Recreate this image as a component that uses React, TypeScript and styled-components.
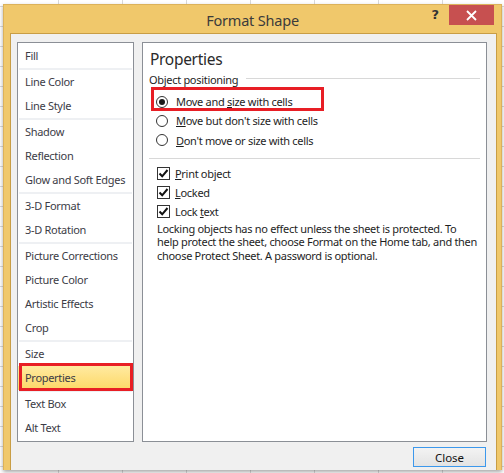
import React from "react";
import styled, { createGlobalStyle } from "styled-components";

const GlobalStyle = createGlobalStyle`
  html, body {
    margin: 0;
    padding: 0;
    width: 504px;
    height: 473px;
    overflow: hidden;
    background-color: #ffffff;
    background-image:
      linear-gradient(to right, #d9d9d9 1px, transparent 1px),
      linear-gradient(to bottom, #d9d9d9 1px, transparent 1px);
    background-size: 64px 100%, 100% 20px;
    background-position: 58px 0, 0 6px;
    font-family: "Segoe UI", "Noto Sans", "Open Sans", sans-serif;
  }
`;

const Screen = styled.div`
  padding: 4px 2px 0 3px;
`;

const Dialog = styled.div`
  display: flex;
  flex-direction: column;
  height: 466px;
  border: 1px solid #dcb25a;
  border-bottom: none;
  background: #f0c86b;
  box-shadow: 0 2px 4px rgba(0, 0, 0, 0.35);
  box-sizing: border-box;
`;

const TitleBar = styled.div`
  display: grid;
  grid-template-columns: 1fr auto 1fr;
  align-items: start;
  height: 28px;
`;

const Title = styled.div`
  grid-column: 2;
  padding-top: 6px;
  font-size: 14.5px;
  letter-spacing: -0.2px;
  line-height: 18px;
  color: #3b3b3b;
`;

const TitleButtons = styled.div`
  grid-column: 3;
  display: flex;
  justify-content: flex-end;
  align-items: center;
  padding-right: 7px;
`;

const HelpGlyph = styled.span`
  font-family: "DejaVu Sans", "Noto Sans", sans-serif;
  font-weight: bold;
  font-size: 13px;
  line-height: 20px;
  color: #333;
  margin-right: 10px;
`;

const CloseBox = styled.div`
  display: flex;
  align-items: center;
  justify-content: center;
  width: 45px;
  height: 20px;
  background: #c75050;
`;

const Body = styled.div`
  flex: 1;
  display: flex;
  flex-direction: column;
  margin: 0 4px 0 6px;
  padding: 8px 9px 0 6px;
  background: #f0f0f0;
  border: 1px solid #c89d45;
  border-bottom: none;
  font-size: 11px;
  letter-spacing: -0.3px;
`;

const Panes = styled.div`
  display: flex;
  gap: 8px;
  height: 400px;
`;

const NavList = styled.div`
  flex: 0 0 117px;
  box-sizing: border-box;
  border: 1px solid #8b8f96;
  background: #ffffff;
  padding-top: 1px;
`;

const NavItem = styled.div<{ $active?: boolean }>`
  position: relative;
  height: 24px;
  line-height: 24px;
  padding-left: 7px;
  color: #3c3c46;
  white-space: nowrap;
  ${(p) =>
    p.$active &&
    `
    background: linear-gradient(#ffeaa0, #fdd866);
    &::after {
      content: "";
      position: absolute;
      top: -3px;
      bottom: -1px;
      left: 1px;
      right: 0;
      border: 3px solid #e81e25;
    }
  `}
`;

const NavSep = styled.div`
  height: 2px;
  margin: 0 1px;
  background: #eef0f3;
`;

const Content = styled.div`
  flex: 1;
  min-width: 0;
  box-sizing: border-box;
  border: 1px solid #8b8f96;
  background: #ffffff;
  padding: 6px 6px 0 6px;
  color: #1e1e1e;
`;

const Heading = styled.div`
  font-size: 15.5px;
  letter-spacing: -0.3px;
  line-height: 20px;
  color: #2a2a2a;
  margin-left: 1px;
`;

const GroupHeader = styled.div`
  display: flex;
  align-items: center;
  height: 16px;
  margin-top: 2px;
  &::after {
    content: "";
    flex: 1;
    height: 1px;
    background: #d8d8d8;
    margin: 0 0 1px 8px;
  }
`;

const OptionList = styled.div`
  display: flex;
  flex-direction: column;
  padding-top: 5px;
`;

const OptionRow = styled.label<{ $marked?: boolean }>`
  position: relative;
  display: flex;
  align-items: center;
  height: 19.3px;
  padding-left: 7px;
  ${(p) =>
    p.$marked &&
    `
    &::after {
      content: "";
      position: absolute;
      top: -5px;
      left: 2px;
      width: 173px;
      height: 24px;
      box-sizing: border-box;
      border: 3px solid #e81e25;
    }
  `}
`;

const Radio = styled.span<{ $on?: boolean }>`
  display: flex;
  align-items: center;
  justify-content: center;
  width: 12px;
  height: 12px;
  box-sizing: border-box;
  border: 1px solid #333;
  border-radius: 50%;
  background: #fff;
  margin-right: 8px;
  &::before {
    content: "";
    display: ${(p) => (p.$on ? "block" : "none")};
    width: 6px;
    height: 6px;
    border-radius: 50%;
    background: #1a1a1a;
  }
`;

const Divider = styled.div`
  height: 1px;
  background: #d8d8d8;
  margin: 8px 0 5px 0;
`;

const CheckRow = styled.label`
  display: flex;
  align-items: center;
  height: 19px;
  padding-left: 8px;
`;

const CheckBox = styled.span`
  display: flex;
  align-items: center;
  justify-content: center;
  width: 13px;
  height: 13px;
  box-sizing: border-box;
  border: 1px solid #333;
  background: #fff;
  margin-right: 5px;
`;

const Note = styled.p`
  margin: 1px 0 0 8px;
  max-width: 326px;
  line-height: 13.4px;
`;

const Footer = styled.div`
  display: flex;
  justify-content: flex-end;
  padding: 5px 1px 0 0;
`;

const Button = styled.button`
  width: 73px;
  height: 20px;
  border: 1px solid #3c98ec;
  background: linear-gradient(#f3f3f3, #e3e3e3);
  font-family: inherit;
  font-size: 11.5px;
  color: #111;
  padding: 0;
`;

const navGroups = [
  ["Fill"],
  ["Line Color", "Line Style"],
  ["Shadow", "Reflection", "Glow and Soft Edges"],
  ["3-D Format", "3-D Rotation"],
  ["Picture Corrections", "Picture Color", "Artistic Effects", "Crop"],
  ["Size", "Properties"],
  ["Text Box", "Alt Text"],
];

const Tick = () => (
  <svg width="11" height="11" viewBox="0 0 11 11">
    <path d="M1.5 5.5 L4.2 8.3 L9.5 2" fill="none" stroke="#111" strokeWidth="2" />
  </svg>
);

export default function App() {
  return (
    <>
      <GlobalStyle />
      <Screen>
        <Dialog>
          <TitleBar>
            <Title>Format Shape</Title>
            <TitleButtons>
              <HelpGlyph>?</HelpGlyph>
              <CloseBox>
                <svg width="11" height="11" viewBox="0 0 11 11">
                  <path d="M1 1 L10 10 M10 1 L1 10" stroke="#fff" strokeWidth="1.8" />
                </svg>
              </CloseBox>
            </TitleButtons>
          </TitleBar>
          <Body>
            <Panes>
              <NavList>
                {navGroups.map((group, gi) => (
                  <React.Fragment key={gi}>
                    {gi > 0 && <NavSep />}
                    {group.map((name) => (
                      <NavItem key={name} $active={name === "Properties"}>
                        {name}
                      </NavItem>
                    ))}
                  </React.Fragment>
                ))}
              </NavList>
              <Content>
                <Heading>Properties</Heading>
                <GroupHeader>Object positioning</GroupHeader>
                <OptionList>
                  <OptionRow $marked>
                    <Radio $on />
                    <span>
                      Move and <u>s</u>ize with cells
                    </span>
                  </OptionRow>
                  <OptionRow>
                    <Radio />
                    <span>
                      <u>M</u>ove but don't size with cells
                    </span>
                  </OptionRow>
                  <OptionRow>
                    <Radio />
                    <span>
                      <u>D</u>on't move or size with cells
                    </span>
                  </OptionRow>
                </OptionList>
                <Divider />
                <CheckRow>
                  <CheckBox>
                    <Tick />
                  </CheckBox>
                  <span>
                    <u>P</u>rint object
                  </span>
                </CheckRow>
                <CheckRow>
                  <CheckBox>
                    <Tick />
                  </CheckBox>
                  <span>
                    <u>L</u>ocked
                  </span>
                </CheckRow>
                <CheckRow>
                  <CheckBox>
                    <Tick />
                  </CheckBox>
                  <span>
                    Lock <u>t</u>ext
                  </span>
                </CheckRow>
                <Note>
                  Locking objects has no effect unless the sheet is protected. To
                  <br />
                  help protect the sheet, choose Format on the Home tab, and then
                  <br />
                  choose Protect Sheet. A password is optional.
                </Note>
              </Content>
            </Panes>
            <Footer>
              <Button>Close</Button>
            </Footer>
          </Body>
        </Dialog>
      </Screen>
    </>
  );
}
